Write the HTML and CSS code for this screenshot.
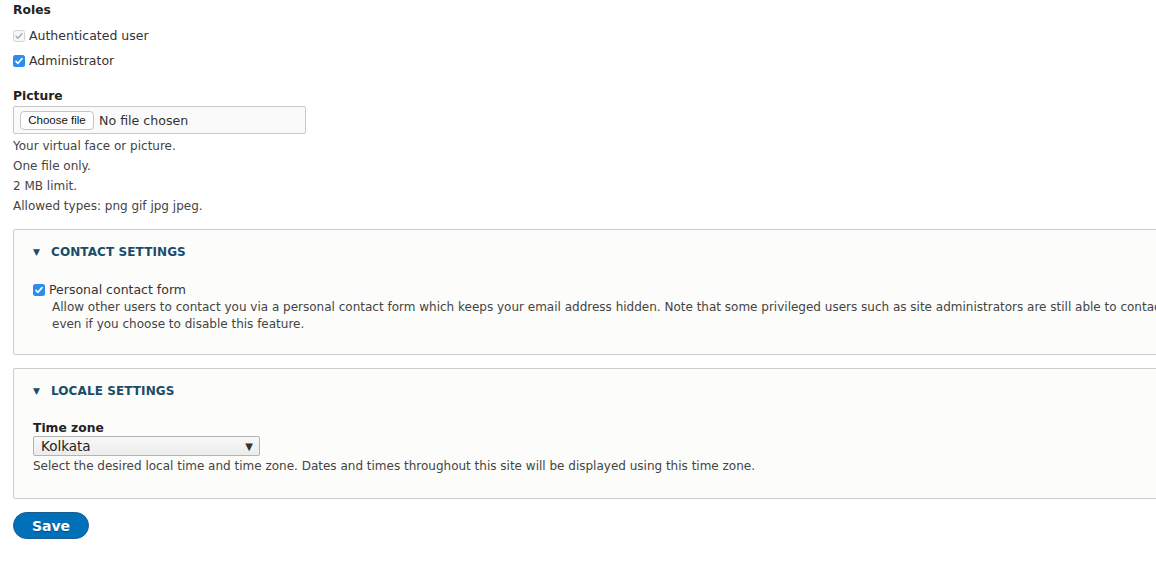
FILE: index.html
```html
<!DOCTYPE html>
<html>
<head>
<meta charset="utf-8">
<link rel="stylesheet" href="styles.css">
</head>
<body>
<form class="form">
  <div class="item">
    <div class="label">Roles</div>
    <div class="check-row first"><span class="cb cb-disabled"><svg viewBox="0 0 12 12"><path d="M3 6.3 L5 8.3 L9 3.6" /></svg></span><span class="check-label">Authenticated user</span></div>
    <div class="check-row"><span class="cb cb-on"><svg viewBox="0 0 12 12"><path d="M3 6.3 L5 8.3 L9 3.6" /></svg></span><span class="check-label">Administrator</span></div>
  </div>

  <div class="item picture">
    <div class="label">Picture</div>
    <div class="file-box"><span class="file-btn">Choose file</span><span class="file-none">No file chosen</span></div>
    <div class="desc desc-lines">
      <div>Your virtual face or picture.</div>
      <div>One file only.</div>
      <div>2 MB limit.</div>
      <div>Allowed types: png gif jpg jpeg.</div>
    </div>
  </div>

  <fieldset class="fs fs-contact">
    <div class="legend"><span class="tri">&#9660;</span><span>CONTACT SETTINGS</span></div>
    <div class="fs-body">
      <div class="check-row"><span class="cb cb-on"><svg viewBox="0 0 12 12"><path d="M3 6.3 L5 8.3 L9 3.6" /></svg></span><span class="check-label">Personal contact form</span></div>
      <div class="desc desc-indent">Allow other users to contact you via a personal contact form which keeps your email address hidden. Note that some privileged users such as site administrators are still able to contact you<br>even if you choose to disable this feature.</div>
    </div>
  </fieldset>

  <fieldset class="fs fs-locale">
    <div class="legend"><span class="tri">&#9660;</span><span>LOCALE SETTINGS</span></div>
    <div class="fs-body">
      <div class="label tz-label">Time zone</div>
      <div class="select"><span>Kolkata</span><span class="sel-arrow">&#9660;</span></div>
      <div class="desc tz-desc">Select the desired local time and time zone. Dates and times throughout this site will be displayed using this time zone.</div>
    </div>
  </fieldset>

  <div class="actions"><span class="btn-save">Save</span></div>
</form>
</body>
</html>
```
FILE: styles.css
```css
html, body {
  margin: 0;
  padding: 0;
  overflow: hidden;
  background: #fff;
}
body {
  font-family: "DejaVu Sans", Verdana, sans-serif;
  font-size: 12.5px;
  color: #333;
}
.form {
  width: 1260px;
  padding: 1px 13px 0 13px;
}
.label {
  font-weight: bold;
  font-size: 12.3px;
  line-height: 18px;
  color: #222;
}
.check-row {
  display: flex;
  align-items: center;
  height: 18px;
  margin-top: 7px;
}
.check-row.first {
  margin-top: 8px;
}
.cb {
  width: 12px;
  height: 12px;
  box-sizing: border-box;
  border-radius: 2.5px;
  margin-right: 4px;
  display: flex;
  flex-shrink: 0;
}
.cb svg {
  width: 12px;
  height: 12px;
  fill: none;
  stroke-width: 1.4;
  stroke-linecap: round;
  stroke-linejoin: round;
}
.cb-disabled {
  border: 1px solid #d2d2d2;
  background: #f7f7f7;
}
.cb-disabled svg {
  stroke: #a8a8a8;
  margin: -1px;
}
.cb-on {
  background: #2a8def;
}
.cb-on svg {
  stroke: #fff;
  stroke-width: 1.7;
}
.check-label {
  line-height: 18px;
}
.picture {
  margin-top: 17px;
}
.file-box {
  margin-top: 1px;
  width: 293px;
  height: 28px;
  box-sizing: border-box;
  border: 1px solid #c8c8c8;
  border-radius: 2px;
  background: #fafafa;
  display: flex;
  align-items: center;
  padding-left: 6px;
}
.file-btn {
  font-family: "Liberation Sans", Arial, sans-serif;
  font-size: 11.5px;
  color: #111;
  background: #fff;
  border: 1px solid #c4c4c4;
  border-radius: 4px;
  height: 19px;
  box-sizing: border-box;
  width: 74px;
  display: flex;
  align-items: center;
  justify-content: center;
  margin-right: 5px;
}
.file-none {
  font-size: 12.6px;
  color: #333;
}
.desc {
  font-size: 12px;
  color: #444;
  line-height: 17px;
}
.desc-lines {
  margin-top: 2px;
  line-height: 20px;
}
.fs {
  margin: 13px 0 0 0;
  padding: 0;
  border: 1px solid #ccc;
  border-radius: 2px;
  background: #fcfcfa;
  min-width: 0;
}
.legend {
  display: flex;
  align-items: center;
  font-weight: bold;
  font-size: 12px;
  letter-spacing: 0.1px;
  color: #1b4b6a;
  line-height: 18px;
  padding: 13px 0 0 19px;
}
.tri {
  font-size: 9px;
  width: 18px;
  color: #1b4b6a;
}
.fs-body {
  padding: 20px 19px 21px 19px;
}
.fs-contact .fs-body .check-row {
  margin-top: 0;
}
.desc-indent {
  padding-left: 19px;
  margin-top: 0;
}
.fs-locale {
  margin-top: 13px;
}
.fs-locale .legend {
  padding-top: 13px;
}
.fs-locale .fs-body {
  padding-top: 19px;
  padding-bottom: 23px;
}
.tz-label {
  margin-bottom: -1px;
}
.select {
  width: 227px;
  height: 20px;
  box-sizing: border-box;
  border: 1px solid #b4b4b4;
  border-radius: 2px;
  background: linear-gradient(#f8f8f8, #ececec);
  display: flex;
  align-items: center;
  justify-content: space-between;
  padding: 0 6px 0 7px;
  font-size: 13.5px;
  color: #222;
}
.sel-arrow {
  font-size: 10px;
  color: #333;
}
.tz-desc {
  margin-top: 2px;
}
.actions {
  margin-top: 13px;
}
.btn-save {
  display: inline-flex;
  align-items: center;
  justify-content: center;
  width: 76px;
  height: 27px;
  box-sizing: border-box;
  border-radius: 14px;
  background: #0071b8;
  border: 1px solid #1e5c90;
  color: #fff;
  font-weight: bold;
  font-size: 14px;
  text-shadow: 0 1px 1px rgba(0,0,0,0.3);
}
```
